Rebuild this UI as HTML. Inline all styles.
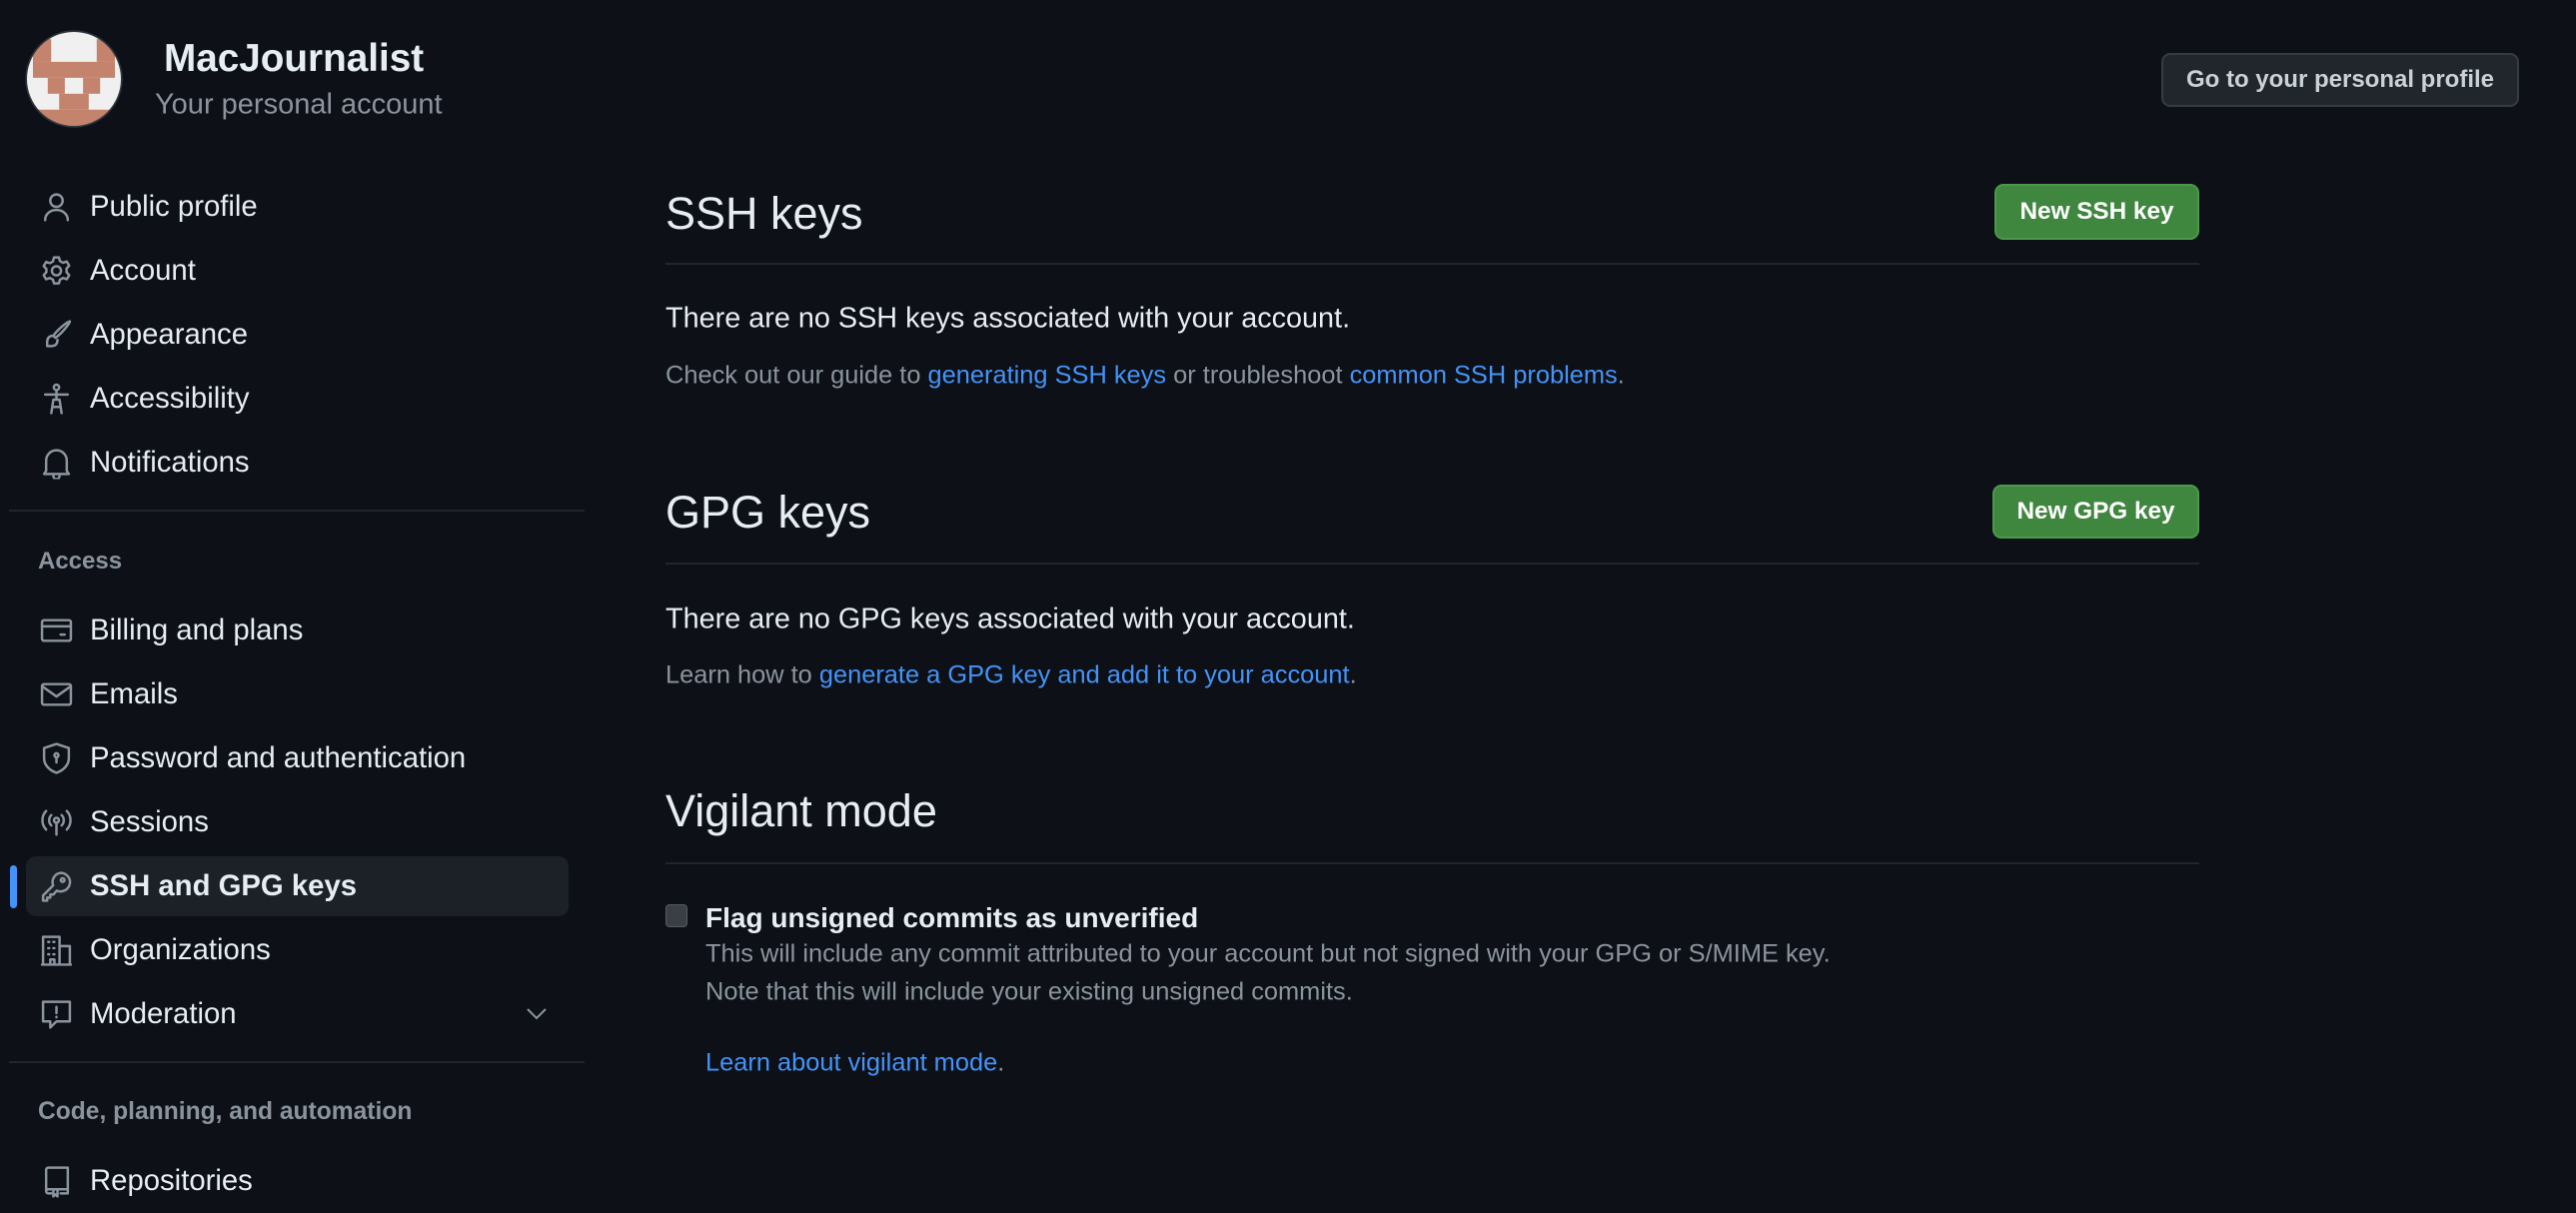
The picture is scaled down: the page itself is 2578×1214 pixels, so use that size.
<!DOCTYPE html>
<html><head><meta charset="utf-8"><style>
*{margin:0;padding:0;box-sizing:border-box}
body{width:2578px;height:1214px;background:#0d1117;font-family:"Liberation Sans",sans-serif;color:#e6edf3;position:relative;overflow:hidden}
.a{position:absolute;white-space:nowrap}
.nav{position:absolute;left:90px;font-size:29.3px;color:#e6edf3;transform:translateY(-50%);white-space:nowrap}
.ic{position:absolute;left:40px;width:33px;height:33px;transform:translateY(-50%)}
.ic svg{width:33px;height:33px;fill:none;stroke:#8b949e;stroke-width:1.2;stroke-linecap:round;stroke-linejoin:round}
.hd{font-weight:bold;color:#8b949e;transform:translateY(-50%);left:38px}
.div{position:absolute;height:2px;background:#21262d}
.h2{position:absolute;left:666px;font-size:45px;color:#e6edf3;transform:translateY(-50%);white-space:nowrap}
.p{position:absolute;font-size:28.8px;transform:translateY(-50%);white-space:nowrap}
.s{position:absolute;font-size:25.4px;color:#8b949e;transform:translateY(-50%);white-space:nowrap}
a{color:#4493f8;text-decoration:none}
.btn{position:absolute;background:#3f863f;border:2px solid #4a9a4a;border-radius:9px;color:#fff;font-size:24.3px;font-weight:bold;display:flex;align-items:center;justify-content:center}
</style></head><body>
<svg class="a" style="left:25px;top:30px" width="98" height="98" viewBox="0 0 86 86"><defs><clipPath id="c"><circle cx="43" cy="43" r="42"/></clipPath></defs><g clip-path="url(#c)"><rect width="86" height="86" fill="#f0f0f0"/><rect x="7" y="8" width="16" height="20" fill="#c3836c"/><rect x="63" y="8" width="16" height="20" fill="#c3836c"/><rect x="7" y="28" width="72" height="14" fill="#c3836c"/><rect x="20" y="42" width="15" height="14" fill="#c3836c"/><rect x="51" y="42" width="15" height="14" fill="#c3836c"/><rect x="30" y="56" width="26" height="14" fill="#c3836c"/><rect x="0" y="70" width="86" height="16" fill="#c3836c"/></g><circle cx="43" cy="43" r="42" fill="none" stroke="#30363d" stroke-width="1.5"/></svg>
<div class="a" style="left:164px;top:59px;transform:translateY(-50%);font-size:38.7px;font-weight:bold;color:#e6edf3">MacJournalist</div>
<div class="a" style="left:155px;top:105px;transform:translateY(-50%);font-size:29px;color:#8b949e">Your personal account</div>
<div class="a" style="left:2163px;top:53px;width:358px;height:54px;background:#21262d;border:2px solid #363b42;border-radius:9px;color:#c9d1d9;font-size:24px;font-weight:bold;display:flex;align-items:center;justify-content:center">Go to your personal profile</div>

<div class="ic" style="top:207px"><svg viewBox="0 0 16 16"><circle cx="8" cy="5" r="3"/><path d="M2.5 14.5c0-3 2.5-5 5.5-5s5.5 2 5.5 5"/></svg></div><div class="nav" style="top:207px">Public profile</div>
<div class="ic" style="top:271px"><svg viewBox="0 0 16 16"><circle cx="8" cy="8" r="2.2"/><path d="M6.8 1.5h2.4l.5 1.8 1.5.8 1.8-.6 1.2 2-1.3 1.4v1.8l1.3 1.4-1.2 2-1.8-.6-1.5.8-.5 1.8H6.8l-.5-1.8-1.5-.8-1.8.6-1.2-2 1.3-1.4V7.1L1.8 5.7l1.2-2 1.8.6 1.5-.8z"/></svg></div><div class="nav" style="top:271px">Account</div>
<div class="ic" style="top:335px"><svg viewBox="0 0 16 16"><path d="M14.5 1.5c-1 0-6 4-8 7l1 1c3-2 7-7 7-8zM6.5 8.5c-2 0-3 1-3 3v2h2c2 0 3-1 3-3"/></svg></div><div class="nav" style="top:335px">Appearance</div>
<div class="ic" style="top:399px"><svg viewBox="0 0 16 16"><circle cx="8" cy="2.5" r="1.3"/><path d="M2.5 6h11M8 4.5v4M5.5 15l1-6.5h3l1 6.5M6 12h4"/></svg></div><div class="nav" style="top:399px">Accessibility</div>
<div class="ic" style="top:463px"><svg viewBox="0 0 16 16"><path d="M3 12V7a5 5 0 0 1 10 0v5l1 1.5H2zM6.5 14.5a1.5 1.5 0 0 0 3 0"/></svg></div><div class="nav" style="top:463px">Notifications</div>
<div class="div" style="left:9px;width:576px;top:510px"></div>
<div class="a hd" style="top:562px;font-size:24px">Access</div>
<div class="ic" style="top:631px"><svg viewBox="0 0 16 16"><rect x="1" y="3" width="14" height="10" rx="1"/><path d="M1 6h14M10 10h2"/></svg></div><div class="nav" style="top:631px">Billing and plans</div>
<div class="ic" style="top:695px"><svg viewBox="0 0 16 16"><rect x="1" y="3" width="14" height="10" rx="1"/><path d="M1 4l7 5 7-5"/></svg></div><div class="nav" style="top:695px">Emails</div>
<div class="ic" style="top:759px"><svg viewBox="0 0 16 16"><path d="M8 1l6 2v5c0 3.5-3 6-6 7-3-1-6-3.5-6-7V3z"/><circle cx="8" cy="6.5" r="1"/><path d="M8 7.5v2.5"/></svg></div><div class="nav" style="top:759px">Password and authentication</div>
<div class="ic" style="top:823px"><svg viewBox="0 0 16 16"><circle cx="8" cy="7" r="1.2"/><path d="M8 8v6M5.5 4.5a3.5 3.5 0 0 0 0 5M10.5 4.5a3.5 3.5 0 0 1 0 5M3 2.5a6.5 6.5 0 0 0 0 9M13 2.5a6.5 6.5 0 0 1 0 9"/></svg></div><div class="nav" style="top:823px">Sessions</div>
<div class="a" style="left:26px;top:857px;width:543px;height:60px;background:#1c2128;border-radius:10px"></div>
<div class="a" style="left:10px;top:866px;width:7px;height:43px;background:#4493f8;border-radius:4px"></div>
<div class="ic" style="top:887px"><svg viewBox="0 0 16 16"><path d="M10 1.5a4.5 4.5 0 1 1-1.8 8.6L6.5 12H5v1.5H3.5V15H1.5v-2.5l4.9-4.9A4.5 4.5 0 0 1 10 1.5z"/><circle cx="11" cy="5" r=".9"/></svg></div><div class="nav" style="top:887px;font-weight:bold">SSH and GPG keys</div>
<div class="ic" style="top:951px"><svg viewBox="0 0 16 16"><path d="M1.5 15V1.5h8V15M9.5 6h5v9M1 15h14M4 4h.5M6.5 4H7M4 7h.5M6.5 7H7M4 10h.5M6.5 10H7M5 15v-2.5h2V15"/></svg></div><div class="nav" style="top:951px">Organizations</div>
<div class="ic" style="top:1015px"><svg viewBox="0 0 16 16"><path d="M1.5 2h13v9.5H8l-3 3v-3H1.5z"/><path d="M8 4.5v3M8 9.3v.2"/></svg></div><div class="nav" style="top:1015px">Moderation</div>
<svg class="a" style="left:525px;top:1006px" width="24" height="16" viewBox="0 0 24 16"><path d="M3 4l9 9 9-9" stroke="#8b949e" stroke-width="2" fill="none"/></svg>
<div class="div" style="left:9px;width:576px;top:1062px"></div>
<div class="a hd" style="top:1113px;font-size:24.6px">Code, planning, and automation</div>
<div class="ic" style="top:1182px"><svg viewBox="0 0 16 16"><path d="M3 13V2.5A1 1 0 0 1 4 1.5h9.5V12H4a1 1 0 0 0-1 1 1 1 0 0 0 1 1h1.5M10 14h3.5v-2M6.5 12v3.5l1-1 1 1V12"/></svg></div><div class="nav" style="top:1182px">Repositories</div>

<div class="h2" style="top:214px">SSH keys</div>
<div class="btn" style="left:1996px;top:184px;width:205px;height:56px">New SSH key</div>
<div class="div" style="left:666px;width:1535px;top:263px"></div>
<div class="p" style="left:666px;top:319px">There are no SSH keys associated with your account.</div>
<div class="s" style="left:666px;top:376px">Check out our guide to <a>generating SSH keys</a> or troubleshoot <a>common SSH problems</a>.</div>

<div class="h2" style="top:513px">GPG keys</div>
<div class="btn" style="left:1994px;top:485px;width:207px;height:54px">New GPG key</div>
<div class="div" style="left:666px;width:1535px;top:563px"></div>
<div class="p" style="left:666px;top:620px">There are no GPG keys associated with your account.</div>
<div class="s" style="left:666px;top:676px">Learn how to <a>generate a GPG key and add it to your account</a>.</div>

<div class="h2" style="top:812px">Vigilant mode</div>
<div class="div" style="left:666px;width:1535px;top:863px"></div>
<div class="a" style="left:666px;top:905px;width:22px;height:23px;background:#3a3f46;border:1px solid #555b63;border-radius:4px"></div>
<div class="p" style="left:706px;top:919px;font-weight:bold;font-size:28px">Flag unsigned commits as unverified</div>
<div class="s" style="left:706px;top:955px">This will include any commit attributed to your account but not signed with your GPG or S/MIME key.</div>
<div class="s" style="left:706px;top:993px">Note that this will include your existing unsigned commits.</div>
<div class="s" style="left:706px;top:1064px"><a>Learn about vigilant mode</a>.</div>
</body></html>
